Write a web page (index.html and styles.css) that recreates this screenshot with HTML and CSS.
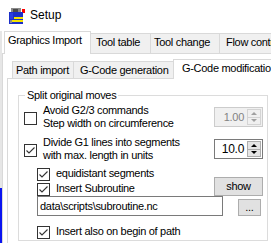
FILE: index.html
```html
<!DOCTYPE html>
<html lang="en">
<head>
  <meta charset="UTF-8" />
  <title>Setup</title>
  <link rel="stylesheet" href="styles.css">
</head>
<body>

  <div class="titlebar">
    <svg class="app-icon" width="16" height="16" viewBox="0 0 16 16">
      <rect x="2" y="0" width="10" height="6" fill="#8a8a8a" />
      <rect x="4" y="1" width="5" height="3" fill="#4a4a4a" />
      <rect x="13" y="1" width="3" height="4" fill="#ff0000" />
      <rect x="0" y="4" width="14" height="12" fill="#1c2fc8" />
      <rect x="1" y="5" width="3" height="6" fill="#2b3fe0" />
      <rect x="5" y="9" width="9" height="2" fill="#f4e400" />
      <rect x="3" y="12" width="11" height="2" fill="#f4e400" />
      <rect x="1" y="12" width="2" height="3" fill="#8a8a8a" />
    </svg>
    <span class="title">Setup</span>
  </div>

  <div class="window">
    <div class="edge"></div>

    <div class="tabs outer">
      <div class="tabrow">
        <div class="tab active t-graphics">Graphics Import</div>
        <div class="tab t-tooltable">Tool table</div>
        <div class="tab t-toolchange">Tool change</div>
        <div class="tab t-flow">Flow control</div>
      </div>

      <div class="page">
        <div class="tabs inner">
          <div class="tabrow">
            <div class="tab first t-path">Path import</div>
            <div class="tab t-gen">G-Code generation</div>
            <div class="tab active t-mod">G-Code modification</div>
          </div>

          <div class="page">
            <fieldset class="group">
              <legend>Split original moves</legend>

              <div class="row row-avoid">
                <label class="check lvl1">
                  <span class="box"></span>
                  <span>Avoid G2/3 commands<br>Step width on circumference</span>
                </label>
                <div class="num disabled">
                  <span class="num-value">1.00</span>
                  <span class="spin">
                    <span class="spin-btn"><span class="arrow up"></span></span>
                    <span class="spin-btn"><span class="arrow down"></span></span>
                  </span>
                </div>
              </div>

              <div class="row row-divide">
                <label class="check lvl1">
                  <span class="box checked"><svg width="11" height="11" viewBox="0 0 11 11"><polyline points="1.5,5.5 4,8 9.5,2.5" /></svg></span>
                  <span>Divide G1 lines into segments<br>with max. length in units</span>
                </label>
                <div class="num big">
                  <span class="num-value">10.0</span>
                  <span class="spin">
                    <span class="spin-btn"><span class="arrow up"></span></span>
                    <span class="spin-btn"><span class="arrow down"></span></span>
                  </span>
                </div>
              </div>

              <div class="row row-equi">
                <label class="check lvl2">
                  <span class="box checked"><svg width="11" height="11" viewBox="0 0 11 11"><polyline points="1.5,5.5 4,8 9.5,2.5" /></svg></span>
                  <span>equidistant segments</span>
                </label>
              </div>

              <div class="row row-sub">
                <label class="check lvl2">
                  <span class="box checked"><svg width="11" height="11" viewBox="0 0 11 11"><polyline points="1.5,5.5 4,8 9.5,2.5" /></svg></span>
                  <span>Insert Subroutine</span>
                </label>
                <button class="btn btn-show">show</button>
              </div>

              <div class="row row-file">
                <div class="textbox">data\scripts\subroutine.nc</div>
                <button class="btn btn-browse">...</button>
              </div>

              <div class="row row-begin">
                <label class="check lvl2">
                  <span class="box checked"><svg width="11" height="11" viewBox="0 0 11 11"><polyline points="1.5,5.5 4,8 9.5,2.5" /></svg></span>
                  <span>Insert also on begin of path</span>
                </label>
              </div>
            </fieldset>
          </div>
        </div>
      </div>
    </div>
  </div>

</body>
</html>
```

FILE: styles.css
```css
body {
  margin: 0;
  width: 271px;
  height: 243px;
  overflow: hidden;
  background: white;
  color: black;
  font-family: "Liberation Sans", Arial, sans-serif;
  font-size: 11px;
  line-height: 13px;
  letter-spacing: -0.3px;
}

/* title bar */
.titlebar {
  height: 31px;
  display: flex;
  align-items: center;
  gap: 5px;
  padding-left: 9px;
}
.title {
  font-size: 12px;
  letter-spacing: 0;
  margin-top: -1px;
}

.window {
  display: flex;
  height: 212px;
}
.edge {
  flex: none;
  width: 2px;
  background: linear-gradient(to bottom, #e6e6e6 0, #e6e6e6 157px, #0a14f0 157px);
}

/* tab controls */
.tabs {
  display: flex;
  flex-direction: column;
  white-space: nowrap;
}
.tabs.outer {
  flex: 1;
  min-width: 0;
}
.tabrow {
  display: flex;
  align-items: flex-end;
  box-shadow: inset 0 -1px #d9d9d9;
}
.tab {
  flex: none;
  box-sizing: border-box;
  background: #f0f0f0;
  border: 1px solid #d9d9d9;
  border-left: none;
}
.tab.first {
  border-left: 1px solid #d9d9d9;
}
.tab.active {
  background: white;
  border-left: 1px solid #d9d9d9;
  border-bottom: none;
}
.page {
  flex: 1;
  border-left: 1px solid #d9d9d9;
}

.outer > .tabrow {
  height: 23px;
  padding-left: 2px;
}
.outer > .tabrow .tab {
  height: 21px;
  padding-top: 2px;
}
.outer > .tabrow .tab.active {
  height: 23px;
  padding-top: 2px;
}
.t-graphics { width: 87px; padding-left: 3px; }
.t-tooltable { width: 60px; padding-left: 5px; }
.t-toolchange { width: 69px; padding-left: 3px; }
.t-flow { width: 70px; padding-left: 6px; }

.tabs.inner {
  margin: 5px 0 0 4px;
  height: 190px;
}
.inner > .tabrow {
  height: 20px;
  padding-left: 5px;
}
.inner > .tabrow .tab {
  height: 18px;
  padding-top: 2px;
}
.inner > .tabrow .tab.active {
  height: 20px;
  padding-top: 2px;
}
.t-path { width: 62px; padding-left: 3px; }
.t-gen { width: 100px; padding-left: 6px; }
.t-mod { width: 110px; margin-left: -1px; padding-left: 8px; }

/* group box */
.group {
  box-sizing: border-box;
  width: 250px;
  margin: 10px 0 0 10px;
  padding: 0 0 1px;
  border: 1px solid #dcdcdc;
  min-inline-size: 0;
}
.group legend {
  margin-left: 6px;
  padding: 0 2px;
  line-height: 13px;
}

.row {
  display: flex;
  align-items: center;
}
.row-avoid { margin-top: 2px; }
.row-divide { margin-top: 6px; }
.row-equi { margin-top: 4px; }
.row-file { align-items: flex-end; }
.row-begin { margin-top: 8px; }

.check {
  flex: 1;
  display: flex;
  align-items: center;
  gap: 6px;
}
.check.lvl1 { margin-left: 5px; }
.check.lvl2 { margin-left: 18px; }
.box {
  flex: none;
  box-sizing: border-box;
  width: 13px;
  height: 13px;
  margin-top: 2px;
  border: 1px solid #333;
  background: white;
}
.box svg {
  display: block;
}
.box polyline {
  fill: none;
  stroke: #333;
  stroke-width: 1.1;
}

/* numeric up-down */
.num {
  flex: none;
  box-sizing: border-box;
  display: flex;
  width: 49px;
  height: 20px;
  margin-right: 4px;
  border: 1px solid #7a7a7a;
  background: white;
}
.num-value {
  flex: 1;
  text-align: right;
  padding-right: 3px;
  line-height: 18px;
}
.num.big .num-value {
  font-size: 12px;
}
.spin {
  display: flex;
  flex-direction: column;
  width: 14px;
  margin: 1px 1px 1px 0;
}
.spin-btn {
  flex: 1;
  display: flex;
  align-items: center;
  justify-content: center;
  box-sizing: border-box;
  background: #e5e5e5;
  border: 1px solid #adadad;
}
.spin-btn + .spin-btn {
  border-top: none;
}
.arrow {
  width: 0;
  height: 0;
  border-left: 3px solid transparent;
  border-right: 3px solid transparent;
}
.arrow.up { border-bottom: 3px solid #000; }
.arrow.down { border-top: 3px solid #000; }

.num.disabled {
  background: #f0f0f0;
  border-color: #cccccc;
  color: #838383;
}
.num.disabled .spin-btn {
  background: #f0f0f0;
  border-color: #d4d4d4;
}
.num.disabled .arrow.up { border-bottom-color: #a0a0a0; }
.num.disabled .arrow.down { border-top-color: #a0a0a0; }

/* buttons and text box */
.btn {
  box-sizing: border-box;
  padding: 0;
  font: inherit;
  letter-spacing: inherit;
  background: #e1e1e1;
  border: 1px solid #adadad;
  color: black;
}
.btn-show {
  width: 49px;
  height: 19px;
  margin: -4px 4px 0 0;
}
.btn-browse {
  width: 23px;
  height: 17px;
  margin-left: 15px;
  line-height: 13px;
}
.textbox {
  box-sizing: border-box;
  width: 186px;
  height: 20px;
  margin-left: 18px;
  padding-left: 2px;
  border: 1px solid #7a7a7a;
  line-height: 18px;
}
```
